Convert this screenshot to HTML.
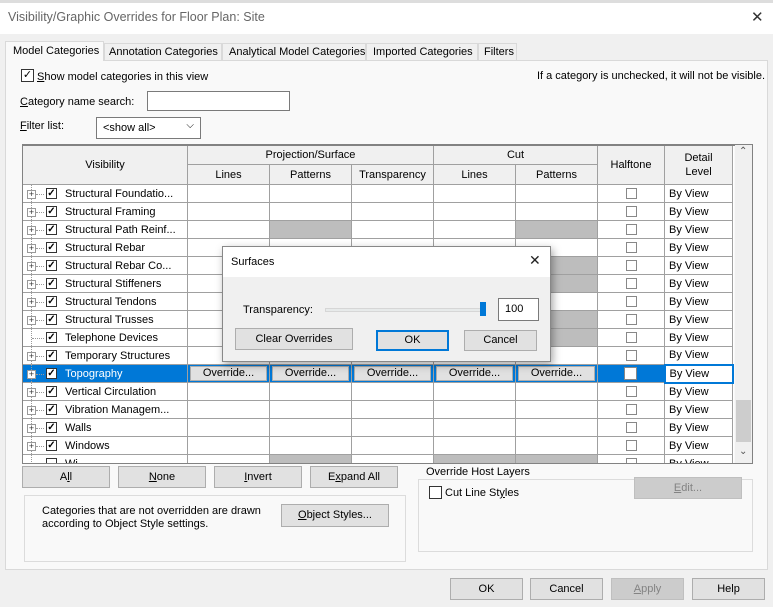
<!DOCTYPE html>
<html><head><meta charset="utf-8"><style>
*{box-sizing:border-box;margin:0;padding:0}
body{width:773px;height:607px;overflow:hidden;background:#f0f0f0;font:11px "Liberation Sans",sans-serif;color:#000;position:relative}
i{font-style:normal}
.a{position:absolute;white-space:nowrap}
.btn{position:absolute;background:#e1e1e1;border:1px solid #adadad;text-align:center;line-height:20px}
.cb{position:absolute;width:13px;height:13px;border:1px solid #333;background:#fff}
.wrap{position:absolute;left:22px;top:144px;width:713px;height:319px;overflow:hidden}
table{border-collapse:collapse;table-layout:fixed;background:#fff}
td{border:1px solid #a0a0a0;height:18px;padding:0;overflow:hidden;white-space:nowrap;position:relative}
th{border:1px solid #a0a0a0;background:#f0f0f0;font-weight:normal;height:20px;padding:0}
.h{background:repeating-conic-gradient(#8a8a8a 0 25%,#f0f0f0 0 50%) 0 0/2px 2px}
.v{padding-left:42px}
.pl{position:absolute;left:4px;top:5px;width:9px;height:9px;border:1px solid #999;background:#fff;font-size:9px;line-height:7px;text-align:center;color:#333}
.dl{position:absolute;left:8px;top:0;bottom:0;border-left:1px dotted #999}
.dh{position:absolute;left:13px;top:9px;width:8px;border-top:1px dotted #999}
.ck{position:absolute;left:23px;top:3px;width:11px;height:11px;border:1px solid #333;background:#fff;font-size:10px;line-height:9px;text-align:center;font-weight:bold}
.hb{display:block;margin:0 auto;width:11px;height:11px;border:1px solid #888;background:#fff}
.dv{padding-left:4px}
.sel td{background:#0078d7;color:#fff}
.ob{display:block;margin:1px 2px;height:15px;background:#e1e1e1;border:1px solid #adadad;color:#000;text-align:center;line-height:13px}
</style></head><body>
<div class="a" style="left:0;top:0;width:773px;height:34px;background:#fff"></div>
<div class="a" style="left:0;top:0;width:773px;height:3px;background:#ddd"></div>
<div class="a" style="left:8px;top:10px;font-size:12.5px;color:#666">Visibility/Graphic Overrides for Floor Plan: Site</div>
<div class="a" style="left:751px;top:8px;font-size:15px;color:#333">✕</div>

<div class="a" style="left:5px;top:60px;width:763px;height:510px;border:1px solid #d9d9d9;background:#f9f9f9"></div>
<div class="a" style="left:5px;top:41px;width:99px;height:20px;background:#f9f9f9;border:1px solid #d9d9d9;border-bottom:none;padding:3px 0 0 7px">Model Categories</div>
<div class="a" style="left:104px;top:43px;width:118px;height:18px;border:1px solid #d9d9d9;padding:2px 0 0 4px;background:#f0f0f0">Annotation Categories</div>
<div class="a" style="left:222px;top:43px;width:144px;height:18px;border:1px solid #d9d9d9;padding:2px 0 0 6px;background:#f0f0f0">Analytical Model Categories</div>
<div class="a" style="left:366px;top:43px;width:112px;height:18px;border:1px solid #d9d9d9;padding:2px 0 0 6px;background:#f0f0f0">Imported Categories</div>
<div class="a" style="left:478px;top:43px;width:39px;height:18px;border:1px solid #d9d9d9;padding:2px 0 0 5px;background:#f0f0f0">Filters</div>

<div class="cb" style="left:21px;top:69px;font-size:11px;line-height:11px;text-align:center">✓</div>
<div class="a" style="left:37px;top:71px"><u>S</u>how model categories in this view</div>
<div class="a" style="right:8px;top:70px">If a category is unchecked, it will not be visible.</div>
<div class="a" style="left:20px;top:96px"><u>C</u>ategory name search:</div>
<div class="a" style="left:147px;top:91px;width:143px;height:20px;border:1px solid #7a7a7a;background:#fff"></div>
<div class="a" style="left:20px;top:120px"><u>F</u>ilter list:</div>
<div class="a" style="left:96px;top:117px;width:105px;height:22px;border:1px solid #7a7a7a;background:#fff;padding:4px 0 0 6px">&lt;show all&gt;<span style="position:absolute;right:6px;top:2px;font-size:10px">⌵</span></div>

<div class="wrap"><table>
<colgroup><col style="width:165px"><col style="width:82px"><col style="width:82px"><col style="width:82px"><col style="width:82px"><col style="width:82px"><col style="width:67px"><col style="width:68px"></colgroup>
<tr><th rowspan="2">Visibility</th><th colspan="3">Projection/Surface</th><th colspan="2">Cut</th><th rowspan="2">Halftone</th><th rowspan="2" style="line-height:14px">Detail<br>Level</th></tr>
<tr><th>Lines</th><th>Patterns</th><th>Transparency</th><th>Lines</th><th>Patterns</th></tr>
<tr><td class="v"><i class="dl"></i><i class="pl">+</i><i class="dh"></i><i class="ck">✓</i>Structural Foundatio...</td><td></td><td></td><td></td><td></td><td></td><td><i class="hb"></i></td><td class="dv">By View</td></tr>
<tr><td class="v"><i class="dl"></i><i class="pl">+</i><i class="dh"></i><i class="ck">✓</i>Structural Framing</td><td></td><td></td><td></td><td></td><td></td><td><i class="hb"></i></td><td class="dv">By View</td></tr>
<tr><td class="v"><i class="dl"></i><i class="pl">+</i><i class="dh"></i><i class="ck">✓</i>Structural Path Reinf...</td><td></td><td class="h"></td><td></td><td></td><td class="h"></td><td><i class="hb"></i></td><td class="dv">By View</td></tr>
<tr><td class="v"><i class="dl"></i><i class="pl">+</i><i class="dh"></i><i class="ck">✓</i>Structural Rebar</td><td></td><td></td><td></td><td></td><td></td><td><i class="hb"></i></td><td class="dv">By View</td></tr>
<tr><td class="v"><i class="dl"></i><i class="pl">+</i><i class="dh"></i><i class="ck">✓</i>Structural Rebar Co...</td><td></td><td></td><td></td><td></td><td class="h"></td><td><i class="hb"></i></td><td class="dv">By View</td></tr>
<tr><td class="v"><i class="dl"></i><i class="pl">+</i><i class="dh"></i><i class="ck">✓</i>Structural Stiffeners</td><td></td><td></td><td></td><td></td><td class="h"></td><td><i class="hb"></i></td><td class="dv">By View</td></tr>
<tr><td class="v"><i class="dl"></i><i class="pl">+</i><i class="dh"></i><i class="ck">✓</i>Structural Tendons</td><td></td><td></td><td></td><td></td><td></td><td><i class="hb"></i></td><td class="dv">By View</td></tr>
<tr><td class="v"><i class="dl"></i><i class="pl">+</i><i class="dh"></i><i class="ck">✓</i>Structural Trusses</td><td></td><td></td><td></td><td></td><td class="h"></td><td><i class="hb"></i></td><td class="dv">By View</td></tr>
<tr><td class="v"><i class="dl"></i><i class="dh" style="left:9px;width:12px"></i><i class="ck">✓</i>Telephone Devices</td><td></td><td></td><td></td><td></td><td class="h"></td><td><i class="hb"></i></td><td class="dv">By View</td></tr>
<tr><td class="v"><i class="dl"></i><i class="pl">+</i><i class="dh"></i><i class="ck">✓</i>Temporary Structures</td><td></td><td></td><td></td><td></td><td></td><td><i class="hb"></i></td><td class="dv">By View</td></tr>
<tr class="sel"><td class="v"><i class="dl"></i><i class="pl">+</i><i class="dh"></i><i class="ck" style="color:#000">✓</i>Topography</td><td><i class="ob">Override...</i></td><td><i class="ob">Override...</i></td><td><i class="ob">Override...</i></td><td><i class="ob">Override...</i></td><td><i class="ob">Override...</i></td><td><i class="hb" style="width:13px;height:13px"></i></td><td class="dv" style="background:#fff;color:#000;border:2px solid #0078d7">By View</td></tr>
<tr><td class="v"><i class="dl"></i><i class="pl">+</i><i class="dh"></i><i class="ck">✓</i>Vertical Circulation</td><td></td><td></td><td></td><td></td><td></td><td><i class="hb"></i></td><td class="dv">By View</td></tr>
<tr><td class="v"><i class="dl"></i><i class="pl">+</i><i class="dh"></i><i class="ck">✓</i>Vibration Managem...</td><td></td><td></td><td></td><td></td><td></td><td><i class="hb"></i></td><td class="dv">By View</td></tr>
<tr><td class="v"><i class="dl"></i><i class="pl">+</i><i class="dh"></i><i class="ck">✓</i>Walls</td><td></td><td></td><td></td><td></td><td></td><td><i class="hb"></i></td><td class="dv">By View</td></tr>
<tr><td class="v"><i class="dl"></i><i class="pl">+</i><i class="dh"></i><i class="ck">✓</i>Windows</td><td></td><td></td><td></td><td></td><td></td><td><i class="hb"></i></td><td class="dv">By View</td></tr>
<tr><td class="v"><i class="dl"></i><i class="ck"></i>Wi</td><td></td><td class="h"></td><td></td><td class="h"></td><td class="h"></td><td><i class="hb"></i></td><td class="dv">By View</td></tr>
</table></div>
<div class="a" style="left:22px;top:144px;width:731px;height:320px;border:1px solid #828282;border-top:2px solid #828282"></div>
<div class="a" style="left:735px;top:145px;width:17px;height:318px;background:#f0f0f0"></div>
<div class="a" style="left:736px;top:400px;width:15px;height:42px;background:#cdcdcd"></div>
<div class="a" style="left:739px;top:146px;font-size:10px;color:#555">⌃</div>
<div class="a" style="left:739px;top:446px;font-size:10px;color:#555">⌄</div>

<div class="a" style="left:222px;top:246px;width:329px;height:116px;background:#f0f0f0;border:1px solid #888;box-shadow:2px 3px 8px rgba(0,0,0,.35)"></div>
<div class="a" style="left:223px;top:247px;width:327px;height:30px;background:#fff"></div>
<div class="a" style="left:231px;top:256px">Surfaces</div>
<div class="a" style="left:529px;top:252px;font-size:14px;color:#222">✕</div>
<div class="a" style="left:243px;top:304px">Transparency:</div>
<div class="a" style="left:325px;top:308px;width:161px;height:4px;background:#e7eaea;border:1px solid #d6d6d6"></div>
<div class="a" style="left:480px;top:302px;width:6px;height:14px;background:#0078d7"></div>
<div class="a" style="left:498px;top:298px;width:41px;height:23px;border:1px solid #7a7a7a;background:#fff;padding:4px 0 0 6px">100</div>
<div class="btn" style="left:235px;top:328px;width:118px;height:22px">Clear Overrides</div>
<div class="btn" style="left:376px;top:330px;width:73px;height:21px;border:2px solid #0078d7;line-height:17px">OK</div>
<div class="btn" style="left:464px;top:330px;width:73px;height:21px;line-height:19px">Cancel</div>

<div class="btn" style="left:22px;top:466px;width:88px;height:22px">A<u>l</u>l</div>
<div class="btn" style="left:118px;top:466px;width:88px;height:22px"><u>N</u>one</div>
<div class="btn" style="left:214px;top:466px;width:88px;height:22px"><u>I</u>nvert</div>
<div class="btn" style="left:310px;top:466px;width:88px;height:22px">E<u>x</u>pand All</div>
<div class="a" style="left:24px;top:495px;width:382px;height:67px;border:1px solid #dcdcdc"></div>
<div class="a" style="left:42px;top:505px;line-height:13px">Categories that are not overridden are drawn<br>according to Object Style settings.</div>
<div class="btn" style="left:281px;top:504px;width:108px;height:23px"><u>O</u>bject Styles...</div>
<div class="a" style="left:418px;top:479px;width:335px;height:73px;border:1px solid #dcdcdc"></div>
<div class="a" style="left:424px;top:466px;background:#f9f9f9;padding:0 2px">Override Host Layers</div>
<div class="cb" style="left:429px;top:486px"></div>
<div class="a" style="left:445px;top:487px">Cut Line St<u>y</u>les</div>
<div class="btn" style="left:634px;top:477px;width:108px;height:22px;background:#ccc;border-color:#bfbfbf;color:#838383"><u>E</u>dit...</div>

<div class="btn" style="left:450px;top:578px;width:73px;height:22px">OK</div>
<div class="btn" style="left:530px;top:578px;width:73px;height:22px">Cancel</div>
<div class="btn" style="left:611px;top:578px;width:73px;height:22px;background:#ccc;border-color:#bfbfbf;color:#838383"><u>A</u>pply</div>
<div class="btn" style="left:692px;top:578px;width:73px;height:22px">Help</div>
</body></html>
